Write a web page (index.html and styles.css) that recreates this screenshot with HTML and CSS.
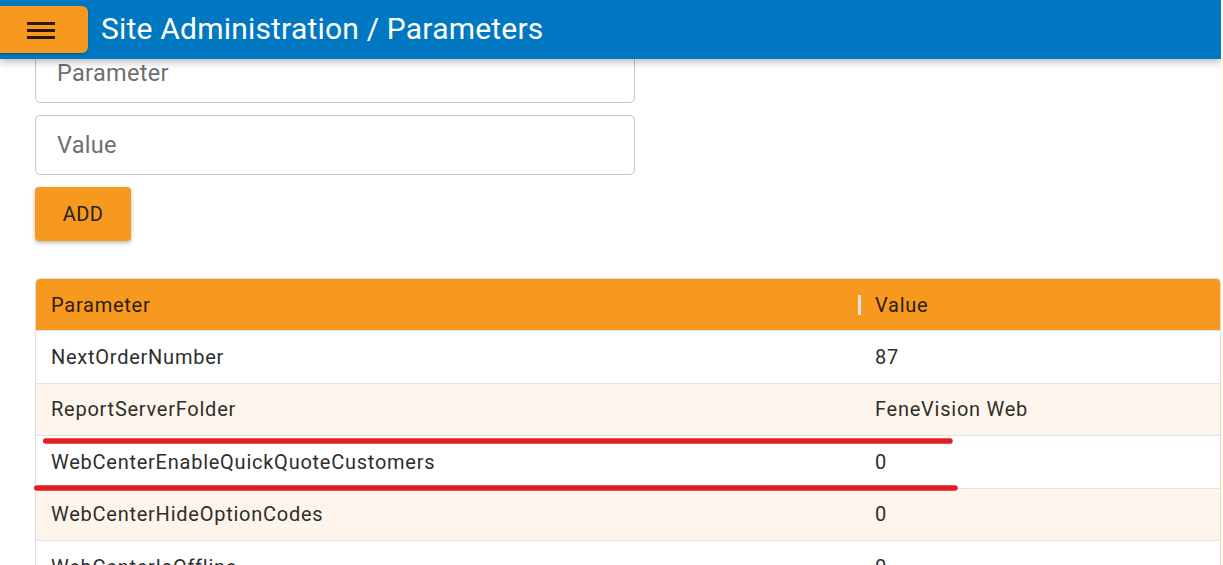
FILE: index.html
```html
<!DOCTYPE html>
<html>
<head>
<meta charset="utf-8">
<link rel="stylesheet" href="styles.css">
</head>
<body>
<div class="page">
  <header class="topbar">
    <button class="menu-btn" aria-label="Menu">
      <svg width="28" height="18" viewBox="0 0 28 18"><rect x="0" y="1" width="28" height="3" fill="#2a1a05"/><rect x="0" y="8" width="28" height="3" fill="#2a1a05"/><rect x="0" y="15" width="28" height="3" fill="#2a1a05"/></svg>
    </button>
    <h1 class="title">Site Administration / Parameters</h1>
  </header>
  <main class="content">
    <div class="field"><input class="input" type="text" placeholder="Parameter"></div>
    <div class="field"><input class="input" type="text" placeholder="Value"></div>
    <button class="add-btn">ADD</button>
    <div class="table-wrap">
      <table class="grid">
        <thead>
          <tr><th class="col-param">Parameter</th><th class="col-value"><span class="sep"></span>Value</th></tr>
        </thead>
        <tbody>
          <tr><td>NextOrderNumber</td><td class="v">87</td></tr>
          <tr class="alt"><td>ReportServerFolder</td><td class="v">FeneVision Web</td></tr>
          <tr><td>WebCenterEnableQuickQuoteCustomers</td><td class="v">0</td></tr>
          <tr class="alt"><td>WebCenterHideOptionCodes</td><td class="v">0</td></tr>
          <tr><td>WebCenterIsOffline</td><td class="v">0</td></tr>
        </tbody>
      </table>
      <svg class="marks" width="1000" height="80" viewBox="0 0 1000 80">
        <line x1="10.75" y1="3" x2="915" y2="3" stroke="#e31b23" stroke-width="5.5" stroke-linecap="round"/>
        <line x1="1.75" y1="50" x2="920" y2="50" stroke="#e31b23" stroke-width="5.5" stroke-linecap="round"/>
      </svg>
    </div>
  </main>
</div>
</body>
</html>
```
FILE: styles.css
```css
html {
  background: #fffce6;
}
body {
  margin: 0;
  font-family: Roboto, "Liberation Sans", sans-serif;
  overflow: hidden;
}
.page {
  width: 1221px;
  height: 565px;
  background: #ffffff;
  position: relative;
  overflow: hidden;
}
.topbar {
  position: absolute;
  top: 0;
  left: 0;
  right: 0;
  height: 59px;
  background: #0078c1;
  display: flex;
  align-items: center;
  z-index: 5;
  box-shadow: 0 3px 8px rgba(0, 0, 0, 0.28);
}
.menu-btn {
  margin-left: -8px;
  width: 96px;
  height: 47px;
  border: none;
  border-radius: 6px;
  background: #f8991f;
  display: flex;
  align-items: center;
  padding: 0 0 0 35px;
  box-shadow: 0 1px 3px rgba(0, 0, 0, 0.25);
}
.menu-btn svg {
  display: block;
}
.title {
  margin: 0 0 0 13px;
  color: #ffffff;
  font-weight: 400;
  font-size: 30px;
  letter-spacing: 0.2px;
  line-height: 1;
  padding-bottom: 2px;
}
.content {
  padding: 43px 0 0 35px;
  display: flex;
  flex-direction: column;
  align-items: flex-start;
}
.field {
  margin-bottom: 12px;
}
.input {
  display: block;
  box-sizing: border-box;
  width: 600px;
  height: 60px;
  border: 1px solid #c6c6c6;
  border-radius: 5px;
  padding: 0 21px;
  font-family: Roboto, "Liberation Sans", sans-serif;
  font-size: 23.5px;
  letter-spacing: 0.3px;
  color: #333;
  background: #fff;
  outline: none;
}
.input::placeholder {
  color: #6f6f6f;
}
.add-btn {
  width: 96px;
  height: 54px;
  border: none;
  border-radius: 4px;
  background: #f8991f;
  color: #222;
  font-family: Roboto, "Liberation Sans", sans-serif;
  font-size: 20px;
  letter-spacing: 0.4px;
  box-shadow: 0 2px 4px rgba(0, 0, 0, 0.28);
  padding: 0;
}
.table-wrap {
  position: relative;
  margin-top: 37px;
  width: 1186px;
}
.grid {
  width: 100%;
  border-collapse: separate;
  border-spacing: 0;
  border: 1px solid #dcdcdc;
  border-bottom: none;
  border-radius: 5px 5px 0 0;
  overflow: hidden;
  font-size: 20px;
  letter-spacing: 0.75px;
  color: #2e2e2e;
}
.grid th {
  background: #f8991f;
  font-weight: 400;
  text-align: left;
  height: 51px;
  padding: 0 0 0 15px;
  color: #2a1e10;
  border-bottom: 1px solid #e2e2e2;
}
.grid th:first-child {
  border-top-left-radius: 4px;
}
.col-param {
  width: 809px;
}
.col-value {
  position: relative;
}
.sep {
  position: absolute;
  left: -2px;
  top: 16px;
  width: 3px;
  height: 20px;
  background: #ece7e1;
}
.grid td {
  height: 51.5px;
  padding: 0 0 0 15px;
  border-bottom: 1px solid #e2e2e2;
  background: #ffffff;
}
.grid tr.alt td {
  background: #fdf5ec;
}
.marks {
  position: absolute;
  left: 0;
  top: 160px;
  pointer-events: none;
  overflow: visible;
}
```
